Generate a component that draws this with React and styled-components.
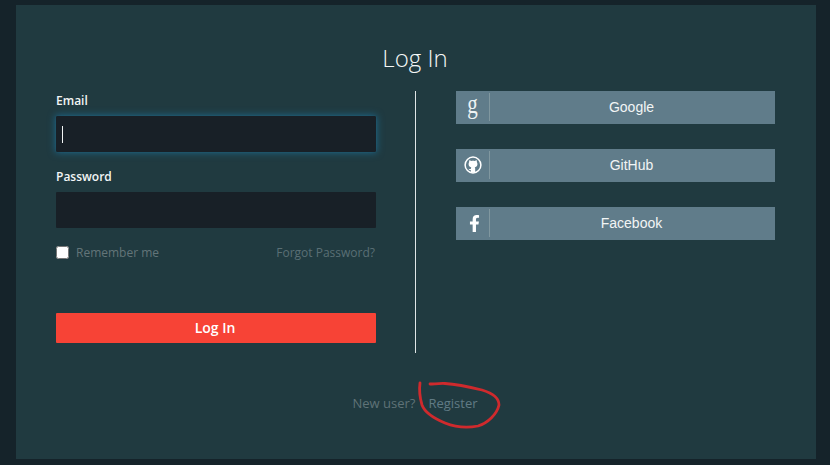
import React from 'react'
import styled, { createGlobalStyle } from 'styled-components'
import { FaFacebookF } from 'react-icons/fa'

const GlobalStyle = createGlobalStyle`
  html, body {
    margin: 0;
    padding: 0;
    background: #15232a;
    font-family: "Open Sans", "Liberation Sans", sans-serif;
  }
`

const GithubIcon = () => (
  <svg width="18" height="18" viewBox="0 0 18 18">
    <circle cx="9" cy="9" r="7.9" fill="none" stroke="#fff" strokeWidth="1.5" />
    <path
      d="M4.6 8.6 C4.5 7.4 4.8 6.6 5.2 6 C5 5.3 5.1 4.6 5.3 4.2 C6 4.2 6.7 4.6 7.2 4.9 C8.3 4.7 9.7 4.7 10.8 4.9 C11.3 4.6 12 4.2 12.7 4.2 C12.9 4.6 13 5.3 12.8 6 C13.2 6.6 13.5 7.4 13.4 8.6 C13.2 10.5 12 11.2 10.7 11.4 C11 11.8 11.2 12.2 11.2 12.8 L11.2 16.4 L6.8 16.4 L6.8 14 C5.6 14.2 5 13.6 4.5 12.7 C5.2 13 5.9 13.2 6.8 12.9 C6.8 12.2 7 11.8 7.3 11.4 C6 11.2 4.8 10.5 4.6 8.6 Z"
      fill="#fff"
    />
  </svg>
)

export default function App() {
  const providers = [
    { name: 'Google', icon: <GoogleGlyph>g</GoogleGlyph> },
    { name: 'GitHub', icon: <GithubIcon /> },
    { name: 'Facebook', icon: <FacebookGlyph size={17} color="#fff" /> },
  ]

  return (
    <>
      <GlobalStyle />
      <Page>
        <Panel>
          <Title>Log In</Title>
          <Columns>
            <LoginForm>
              <FieldLabel>Email</FieldLabel>
              <EmailBox>
                <Caret />
              </EmailBox>
              <FieldLabel $spaced>Password</FieldLabel>
              <PasswordBox />
              <OptionsRow>
                <RememberLabel>
                  <RememberCheck type="checkbox" readOnly />
                  Remember me
                </RememberLabel>
                <MutedLink>Forgot Password?</MutedLink>
              </OptionsRow>
              <SubmitButton>Log In</SubmitButton>
            </LoginForm>
            <Divider />
            <SocialList>
              {providers.map((provider) => (
                <SocialButton key={provider.name}>
                  <SocialIcon>{provider.icon}</SocialIcon>
                  <SocialName>{provider.name}</SocialName>
                </SocialButton>
              ))}
            </SocialList>
          </Columns>
          <Footer>
            <FooterText>New user?</FooterText>
            <RegisterLink>Register</RegisterLink>
          </Footer>
        </Panel>
        {/* hand drawn circle around the register link */}
        <Scribble viewBox="0 0 830 465" width="830" height="465">
          <path
            d="M420 383 C419 390 420 398 422 405 C425 413 433 418 445 423 C455 427 468 428 478 426 C488 423 497 414 499 405 C499 398 492 393 482 390 C470 387 455 384 445 383.5 C438 383.3 434 384 430 384"
            fill="none"
            stroke="#cf2a2d"
            strokeWidth="2.8"
            strokeLinecap="round"
          />
        </Scribble>
      </Page>
    </>
  )
}

const Page = styled.div`
  position: relative;
  width: 830px;
  height: 465px;
  padding: 5px 14px 6px 16px;
  box-sizing: border-box;
  overflow: hidden;
`

const Panel = styled.div`
  height: 100%;
  background: #203a40;
  padding: 0 40px;
  box-sizing: border-box;
  display: flex;
  flex-direction: column;
`

const Title = styled.h1`
  margin: 0;
  padding: 36px 2px 0 0;
  height: 50px;
  color: #f4f7f7;
  font-size: 24px;
  font-weight: 300;
  line-height: 33px;
  text-align: center;
`

const Columns = styled.div`
  display: flex;
  height: 262px;
`

const LoginForm = styled.form`
  width: 320px;
  display: flex;
  flex-direction: column;
`

const FieldLabel = styled.div`
  color: #f2f5f5;
  font-size: 12px;
  font-weight: 550;
  line-height: 18px;
  padding-top: 1px;
  margin-bottom: 6px;
  margin-top: ${(props) => (props.$spaced ? '15px' : '0')};
`

const PasswordBox = styled.div`
  height: 36px;
  background: #182027;
  border-radius: 1px;
`

const EmailBox = styled(PasswordBox)`
  box-shadow: 0 0 1px 0 #1f6d8e, 0 0 7px 1px #1d6282;
  display: flex;
  align-items: center;
  padding-left: 6px;
`

const Caret = styled.span`
  width: 1px;
  height: 17px;
  background: #f2f5f5;
`

const OptionsRow = styled.div`
  display: flex;
  justify-content: space-between;
  align-items: center;
  height: 18px;
  margin-top: 15px;
`

const RememberLabel = styled.label`
  display: flex;
  align-items: center;
  color: #637579;
  font-size: 12px;
`

const RememberCheck = styled.input`
  width: 13px;
  height: 13px;
  margin: 1px 7px 0 0;
`

const MutedLink = styled.span`
  color: #5a6f75;
  font-size: 12px;
  margin-right: 1px;
`

const SubmitButton = styled.button`
  margin-top: 52px;
  height: 30px;
  padding: 0 2px 2px 0;
  border: 0;
  border-radius: 1px;
  background: #f74336;
  color: #fff;
  font-family: "Open Sans", sans-serif;
  font-size: 14px;
  font-weight: 600;
`

const Divider = styled.div`
  width: 1px;
  margin: 0 40px 0 39px;
  background: #dfe5e6;
`

const SocialList = styled.div`
  width: 319px;
  display: flex;
  flex-direction: column;
  gap: 25px;
`

const SocialButton = styled.div`
  height: 33px;
  background: #607c8a;
  display: flex;
  align-items: stretch;
`

const SocialIcon = styled.div`
  width: 33px;
  margin: 2px 0 3px;
  border-right: 1px solid #80979f;
  display: flex;
  align-items: center;
  justify-content: center;
`

const GoogleGlyph = styled.span`
  color: #eef3f4;
  font-family: "Liberation Serif", serif;
  font-size: 21px;
  line-height: 21px;
  margin-top: -6px;
  transform: scale(1, 1.25);
`

const FacebookGlyph = styled(FaFacebookF)`
  margin-left: 3px;
`

const SocialName = styled.div`
  flex: 1;
  padding-right: 2px;
  text-align: center;
  color: #f2f5f5;
  font-family: "Liberation Sans", Arial, sans-serif;
  font-size: 14px;
  line-height: 32px;
`

const Footer = styled.div`
  display: flex;
  justify-content: center;
  gap: 13px;
  margin-top: 40px;
  padding-right: 2px;
  font-size: 13px;
  line-height: 20px;
`

const FooterText = styled.span`
  color: #5f7277;
`

const RegisterLink = styled.span`
  color: #607b85;
`

const Scribble = styled.svg`
  position: absolute;
  left: 0;
  top: 0;
  pointer-events: none;
`
